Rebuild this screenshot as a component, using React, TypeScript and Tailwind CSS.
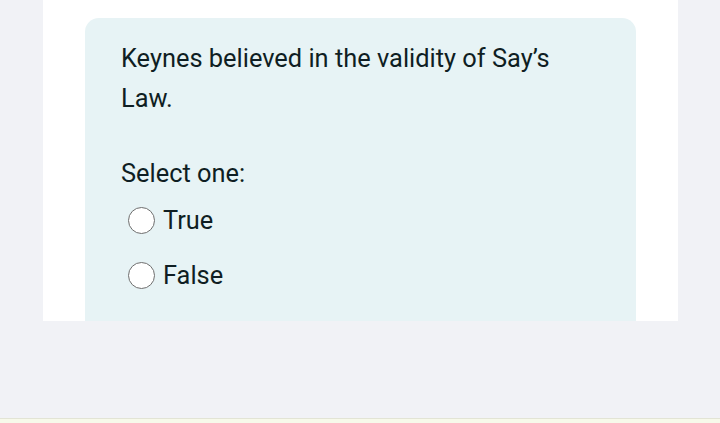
export default function App() {
  const options = ["True", "False"];
  return (
    <div
      className="h-[423px] w-[720px] bg-[#f1f2f6] flex flex-col overflow-hidden text-[#0f1e23]"
      style={{ fontFamily: "Roboto, 'Noto Sans', sans-serif" }}
    >
      {/* Question panel */}
      <div className="ml-[43px] w-[635px] h-[321px] bg-white overflow-hidden px-[42px] pt-[18px]">
        <div className="bg-[#e7f3f5] rounded-t-[14px] h-[400px] pl-[36px] pr-[40px] pt-[20px]">
          <p className="text-[25.4px] leading-[40px]">
            Keynes believed in the validity of Say’s Law.
          </p>
          <p className="mt-[35px] text-[25.4px] leading-[40px]">Select one:</p>
          <div className="flex flex-col gap-[15px] mt-[7px]">
            {options.map((o) => (
              <label key={o} className="flex items-center gap-[9px] pl-[7px] h-[40px] text-[25.4px]">
                <span className="w-[27px] h-[27px] rounded-full bg-white border-[1.5px] border-[#6e6e6e] shrink-0" />
                <span className="-ml-[1px]">{o}</span>
              </label>
            ))}
          </div>
        </div>
      </div>

      <div className="flex-1" />

      {/* Footer strip */}
      <div className="h-[5px] border-t border-[#e2e4d5] bg-[#f7f9ea]" />
    </div>
  );
}
